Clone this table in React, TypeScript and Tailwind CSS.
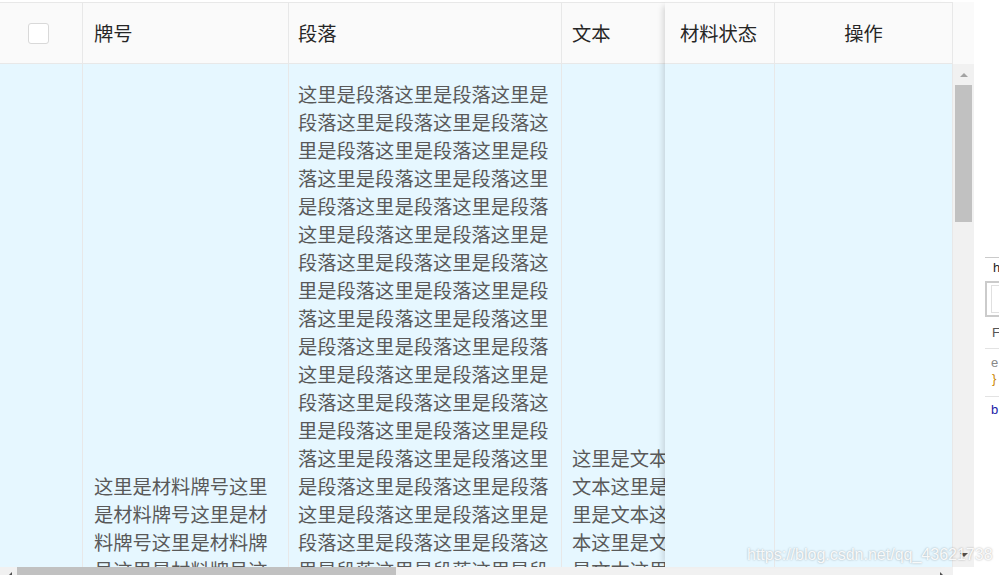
import React from "react";

// cell text, repeated so the rows wrap like the original table
const label = "这里是材料牌号".repeat(20);
const para = "这里是段落".repeat(112);
const text = "这里是文本".repeat(28);

const cjk = "font-['Noto_Sans_CJK_SC','Noto_Sans',sans-serif]";

function Checkbox() {
  return <div className="h-[21px] w-[21px] rounded-[3px] border border-[#d9d9d9] bg-white" />;
}

// scrollbar arrow triangles
function Arrow({ dir, color }: { dir: "up" | "down" | "left" | "right"; color: string }) {
  const pts = {
    up: "0,4 4,0 8,4",
    down: "0,0 8,0 4,4",
    left: "4,0 4,8 0,4",
    right: "0,0 0,8 4,4",
  }[dir];
  const vertical = dir === "up" || dir === "down";
  return (
    <svg width={vertical ? 8 : 4} height={vertical ? 4 : 8} viewBox={vertical ? "0 0 8 4" : "0 0 4 8"}>
      <polygon points={pts} fill={color} />
    </svg>
  );
}

export default function App() {
  return (
    <div className={`relative flex h-[575px] w-[999px] overflow-hidden bg-white ${cjk}`}>
      {/* table + scrollbars */}
      <div className="mt-[2px] flex w-[974px] flex-col">
        <div className="flex">
          {/* scrolling columns */}
          <div className="flex w-[665px] flex-col overflow-hidden">
            <div className="flex h-[62px] w-max border-y border-[#e8e8e8] bg-[#fafafa] text-[19.3px] text-[#262626]">
              <div className="flex w-[83px] shrink-0 items-center border-r border-[#e8e8e8] pl-[28px]">
                <Checkbox />
              </div>
              <div className="flex w-[206px] shrink-0 items-center border-r border-[#e8e8e8] pl-[11px]">牌号</div>
              <div className="flex w-[273px] shrink-0 items-center border-r border-[#e8e8e8] pl-[9px]">段落</div>
              <div className="flex w-[176px] shrink-0 items-center border-r border-[#e8e8e8] pl-[10px]">文本</div>
            </div>
            <div className="h-[503px] overflow-hidden bg-[#e6f7ff]">
              <div className="flex w-max items-stretch text-[19.3px] leading-[28px] text-[#595959]">
                <div className="w-[83px] shrink-0 border-r border-[#e8e8e8]" />
                <div className="flex w-[206px] shrink-0 flex-col justify-center border-r border-[#e8e8e8] pl-[11px] pr-[12px]">
                  {label}
                </div>
                <div className="w-[273px] shrink-0 border-r border-[#e8e8e8] py-[16px] pl-[9px] pr-[9px]">{para}</div>
                <div className="flex w-[176px] shrink-0 flex-col justify-center border-r border-[#e8e8e8] pl-[10px] pr-[8px]">
                  {text}
                </div>
              </div>
            </div>
          </div>

          {/* fixed right columns */}
          <div className="relative z-10 flex w-[288px] flex-col shadow-[-6px_0_6px_-4px_rgba(0,0,0,0.15)]">
            <div className="flex h-[62px] border-y border-[#e8e8e8] bg-[#fafafa] text-[19.3px] text-[#262626]">
              <div className="flex w-[110px] items-center border-r border-[#e8e8e8] pl-[15px]">材料状态</div>
              <div className="flex w-[178px] items-center justify-center border-r border-[#e8e8e8]">操作</div>
            </div>
            <div className="flex h-[503px] bg-[#e6f7ff]">
              <div className="w-[110px] border-r border-[#e8e8e8]" />
              <div className="w-[178px] border-r border-[#e8e8e8]" />
            </div>
          </div>

          {/* vertical scrollbar */}
          <div className="flex w-[21px] flex-col">
            <div className="h-[62px] bg-[#fafafa]" />
            <div className="flex h-[503px] flex-col items-center bg-[#f1f1f1]">
              <div className="mt-[9px]">
                <Arrow dir="up" color="#a3a3a3" />
              </div>
              <div className="mt-[8px] h-[137px] w-[17px] bg-[#c1c1c1]" />
              <div className="flex-1" />
              <div className="mb-[10px]">
                <Arrow dir="down" color="#505050" />
              </div>
            </div>
          </div>
        </div>

        {/* horizontal scrollbar */}
        <div className="flex h-[21px] w-[953px] items-center bg-[#f1f1f1]">
          <div className="ml-[8px]">
            <Arrow dir="left" color="#505050" />
          </div>
          <div className="ml-[5px] h-[17px] w-[379px] bg-[#c1c1c1]" />
          <div className="flex-1" />
          <div className="mr-[9px]">
            <Arrow dir="right" color="#505050" />
          </div>
        </div>
      </div>

      {/* edge of the devtools panel */}
      <div className="flex w-[25px] flex-col pt-[257px] font-['Liberation_Sans',sans-serif] text-[13px]">
        <div className="ml-[11px] h-[24px] border-t border-[#cacaca] pl-[8px] leading-[20px] text-[#222]">h</div>
        <div className="ml-[11px] h-[36px] border-y-2 border-l-2 border-[#cbcbcb] py-[2px] pl-[4px]">
          <div className="h-full border-y border-l border-[#e0e0e0]" />
        </div>
        <div className="ml-[11px] h-[31px] pl-[7px] leading-[31px] text-[#555]">F</div>
        <div className="ml-[11px] flex h-[48px] flex-col border-t border-[#e3e3e3] pl-[6px] pt-[6px] leading-[16px]">
          <span className="text-[#888]">e</span>
          <span className="pl-[1px] text-[#c80]">{"}"}</span>
        </div>
        <div className="ml-[11px] border-t border-[#e3e3e3] pl-[6px] pt-[5px] leading-[16px] text-[#1a1aa6]">b</div>
      </div>

      {/* watermark */}
      <div className="absolute left-[747px] top-[546px] z-20 font-['Liberation_Sans',sans-serif] text-[16px] leading-[18px] text-white/90 [text-shadow:0_0_2px_rgba(0,0,0,0.35)]">
        https://blog.csdn.net/qq_43621738
      </div>
    </div>
  );
}
